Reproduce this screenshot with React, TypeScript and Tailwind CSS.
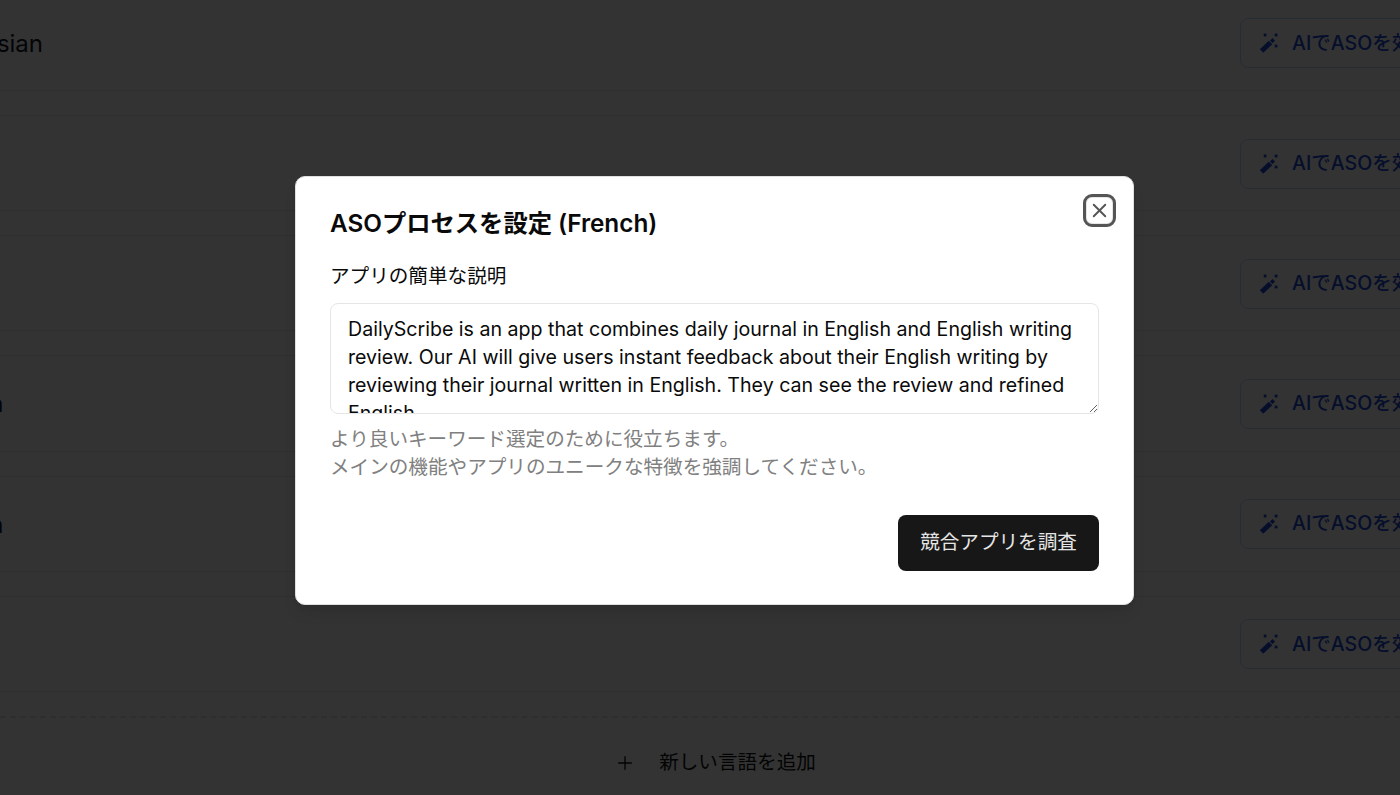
import React from 'react';
import { X } from 'lucide-react';
import { RxPlus } from 'react-icons/rx';

const font = { fontFamily: 'Inter, "Noto Sans CJK JP", sans-serif' };

const rows = ['Indonesian', 'Korean', 'Thai', 'Persian', 'Persian', 'Dutch'];

// Filled wand with three small crosses, drawn to match the reference
const WandIcon = () => (
  <svg viewBox="0 0 24 24" className="w-[24px] h-[24px] shrink-0" fill="none" stroke="currentColor">
    <path d="M3.5 20 L12.5 11.5" strokeWidth="5" />
    <path d="M13.2 10.8 L15.8 8.4" strokeWidth="3.6" />
    <path d="M5.8 2.8 L8.4 5.4 M8.4 2.8 L5.8 5.4 M16.8 2.8 L19.4 5.4 M19.4 2.8 L16.8 5.4 M16.8 13.6 L19.4 16.2 M19.4 13.6 L16.8 16.2" strokeWidth="1.3" />
  </svg>
);

const LangRow: React.FC<{ name: string }> = ({ name }) => (
  <div className="h-[96.2px] shrink-0 border-y border-[#e8e8e8] flex items-center justify-between pt-[1px] mb-[24px]">
    <div className="-ml-[81px] mt-[1px] text-[24px] text-[#111827] leading-8">{name}</div>
    <div className="-mr-[100px] w-[260px] h-[50px] border border-[#bfdbfe] rounded-lg flex items-center pl-[17px] gap-[10px] text-[19.6px] font-medium text-[#1d4ed8] whitespace-nowrap overflow-hidden">
      <WandIcon />
      <span>AIでASOを効率化</span>
    </div>
  </div>
);

export default function App() {
  return (
    <div className="relative w-[1400px] h-[795px] overflow-hidden bg-white" style={font}>
      {/* page behind the dialog */}
      <div className="flex flex-col -mt-[5.2px]">
        {rows.map((r, i) => (
          <LangRow key={i} name={r} />
        ))}
        <div className="border-t-2 border-dashed border-[#e5e5e5] h-[92px] flex items-center justify-center gap-[24px] pl-[31px] text-[19.6px] text-[#111]">
          <RxPlus className="w-[20px] h-[20px]" />
          <span>新しい言語を追加</span>
        </div>
      </div>

      {/* overlay */}
      <div className="absolute inset-0 bg-black/80 flex items-start justify-center pt-[176px] pl-[29px]">
        <div className="relative w-[839px] h-[429px] bg-white rounded-[10px] border border-[#e0e0e0] px-[34px] pt-[30px] shadow-lg">
          <button className="absolute right-[17px] top-[17px] w-[33px] h-[33px] rounded-[9px] border-[3px] border-[#555] shadow-[inset_0_0_0_1px_#e5e5e5] flex items-center justify-center text-[#555]">
            <X className="w-[23px] h-[23px]" strokeWidth={2} />
          </button>
          <h2 className="text-[24.3px] leading-[32px] font-semibold text-[#0a0a0a]">ASOプロセスを設定 (French)</h2>
          <label className="block mt-[23px] text-[19.6px] leading-[28px] text-[#0a0a0a]">アプリの簡単な説明</label>
          <textarea
            readOnly
            className="block mt-[13px] w-[769px] h-[111px] rounded-lg border border-[#e5e5e5] px-[17px] py-[11px] text-[19.6px] leading-[28px] text-[#0a0a0a] outline-none"
            value="DailyScribe is an app that combines daily journal in English and English writing review. Our AI will give users instant feedback about their English writing by reviewing their journal written in English. They can see the review and refined English."
          />
          <p className="mt-[11px] text-[19.6px] leading-[28px] text-[#808080]">
            より良いキーワード選定のために役立ちます。
            <br />
            メインの機能やアプリのユニークな特徴を強調してください。
          </p>
          <div className="mt-[34px] w-[769px] flex justify-end">
            <button className="w-[201px] h-[56px] rounded-lg bg-[#171717] text-[#e5e5e5] text-[19.6px]">競合アプリを調査</button>
          </div>
        </div>
      </div>
    </div>
  );
}
